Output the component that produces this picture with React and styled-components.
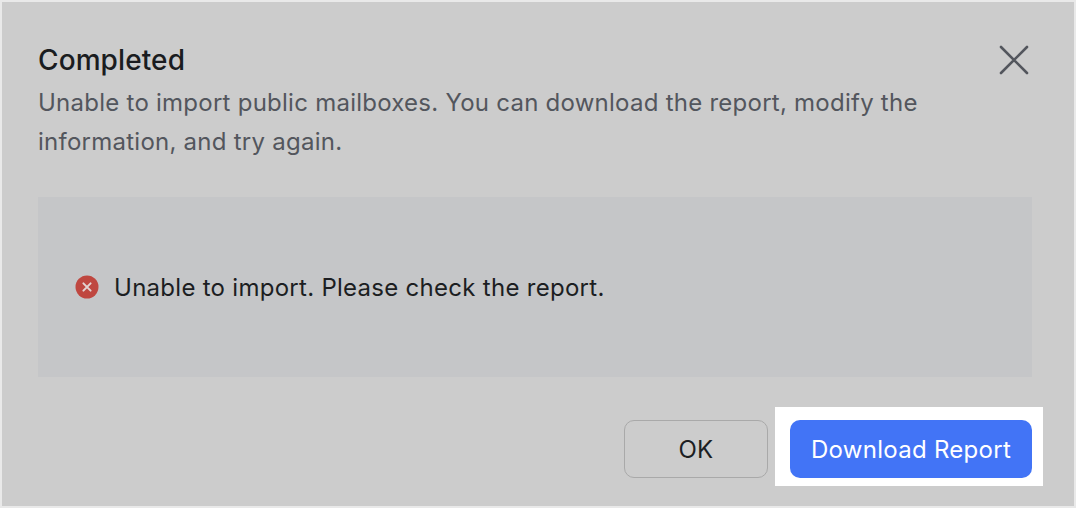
import React from 'react';
import styled, { createGlobalStyle } from 'styled-components';

const GlobalStyle = createGlobalStyle`
  html, body {
    margin: 0;
    padding: 0;
    background: #e9e9e9;
  }
  body {
    font-family: Inter, "Liberation Sans", sans-serif;
  }
`;

const Page = styled.div`
  width: 1076px;
  height: 508px;
  box-sizing: border-box;
  padding: 2px;
  overflow: hidden;
`;

const Dialog = styled.div`
  height: 504px;
  box-sizing: border-box;
  padding: 40px 42px 28px 36px;
  background: #cccccc;
  display: flex;
  flex-direction: column;
`;

const Header = styled.div`
  display: flex;
  justify-content: space-between;
  align-items: flex-start;
`;

const Title = styled.h2`
  margin: 0;
  font-size: 28px;
  line-height: 36px;
  font-weight: 500;
  letter-spacing: 0.1px;
  color: #1a1c20;
`;

const CloseButton = styled.button`
  border: 0;
  padding: 0;
  margin: 3px 3px 0 0;
  width: 30px;
  height: 30px;
  background: none;
  display: flex;
`;

const Message = styled.p`
  margin: 5px 0 0;
  width: 900px;
  font-size: 24px;
  line-height: 39px;
  letter-spacing: 0.25px;
  color: #53565d;
`;

const ResultPanel = styled.div`
  margin-top: 36px;
  height: 180px;
  padding-left: 37px;
  background: #c5c6c8;
  display: flex;
  align-items: center;
  gap: 15px;
`;

const ResultText = styled.span`
  font-size: 24px;
  letter-spacing: 0.28px;
  color: #1c1e22;
`;

const Footer = styled.div`
  margin-top: auto;
  display: flex;
  justify-content: flex-end;
  gap: 22px;
`;

const BaseButton = styled.button`
  height: 58px;
  box-sizing: border-box;
  border-radius: 10px;
  font-family: inherit;
  font-size: 24px;
  letter-spacing: 0.28px;
  display: flex;
  align-items: center;
  justify-content: center;
`;

const GhostButton = styled(BaseButton)`
  width: 144px;
  border: 1px solid #a9a9a9;
  background: transparent;
  color: #1c1e22;
`;

const PrimaryButton = styled(BaseButton)`
  width: 242px;
  border: 0;
  background: #4274f6;
  color: #ffffff;
`;

const Spotlight = styled.div`
  background: #ffffff;
  padding: 13px 11px 8px 15px;
  margin: -13px -11px -8px -15px;
  display: flex;
`;

const CloseIcon = () => (
  <svg width="30" height="30" viewBox="0 0 30 30" fill="none">
    <path d="M2 2L28 28M28 2L2 28" stroke="#53565d" strokeWidth="2.6" strokeLinecap="round" />
  </svg>
);

const ErrorIcon = () => (
  <svg width="24" height="24" viewBox="0 0 24 24" fill="none">
    <circle cx="12" cy="12" r="11.5" fill="#bf4740" />
    <path d="M8.4 8.4L15.6 15.6M15.6 8.4L8.4 15.6" stroke="#e3d4d3" strokeWidth="2" strokeLinecap="round" />
  </svg>
);

export default function App() {
  return (
    <>
      <GlobalStyle />
      <Page>
        <Dialog>
          <Header>
            <Title>Completed</Title>
            <CloseButton aria-label="Close">
              <CloseIcon />
            </CloseButton>
          </Header>
          <Message>
            Unable to import public mailboxes. You can download the report, modify the information, and try again.
          </Message>
          <ResultPanel>
            <ErrorIcon />
            <ResultText>Unable to import. Please check the report.</ResultText>
          </ResultPanel>
          <Footer>
            <GhostButton>OK</GhostButton>
            <Spotlight>
              <PrimaryButton>Download Report</PrimaryButton>
            </Spotlight>
          </Footer>
        </Dialog>
      </Page>
    </>
  );
}
